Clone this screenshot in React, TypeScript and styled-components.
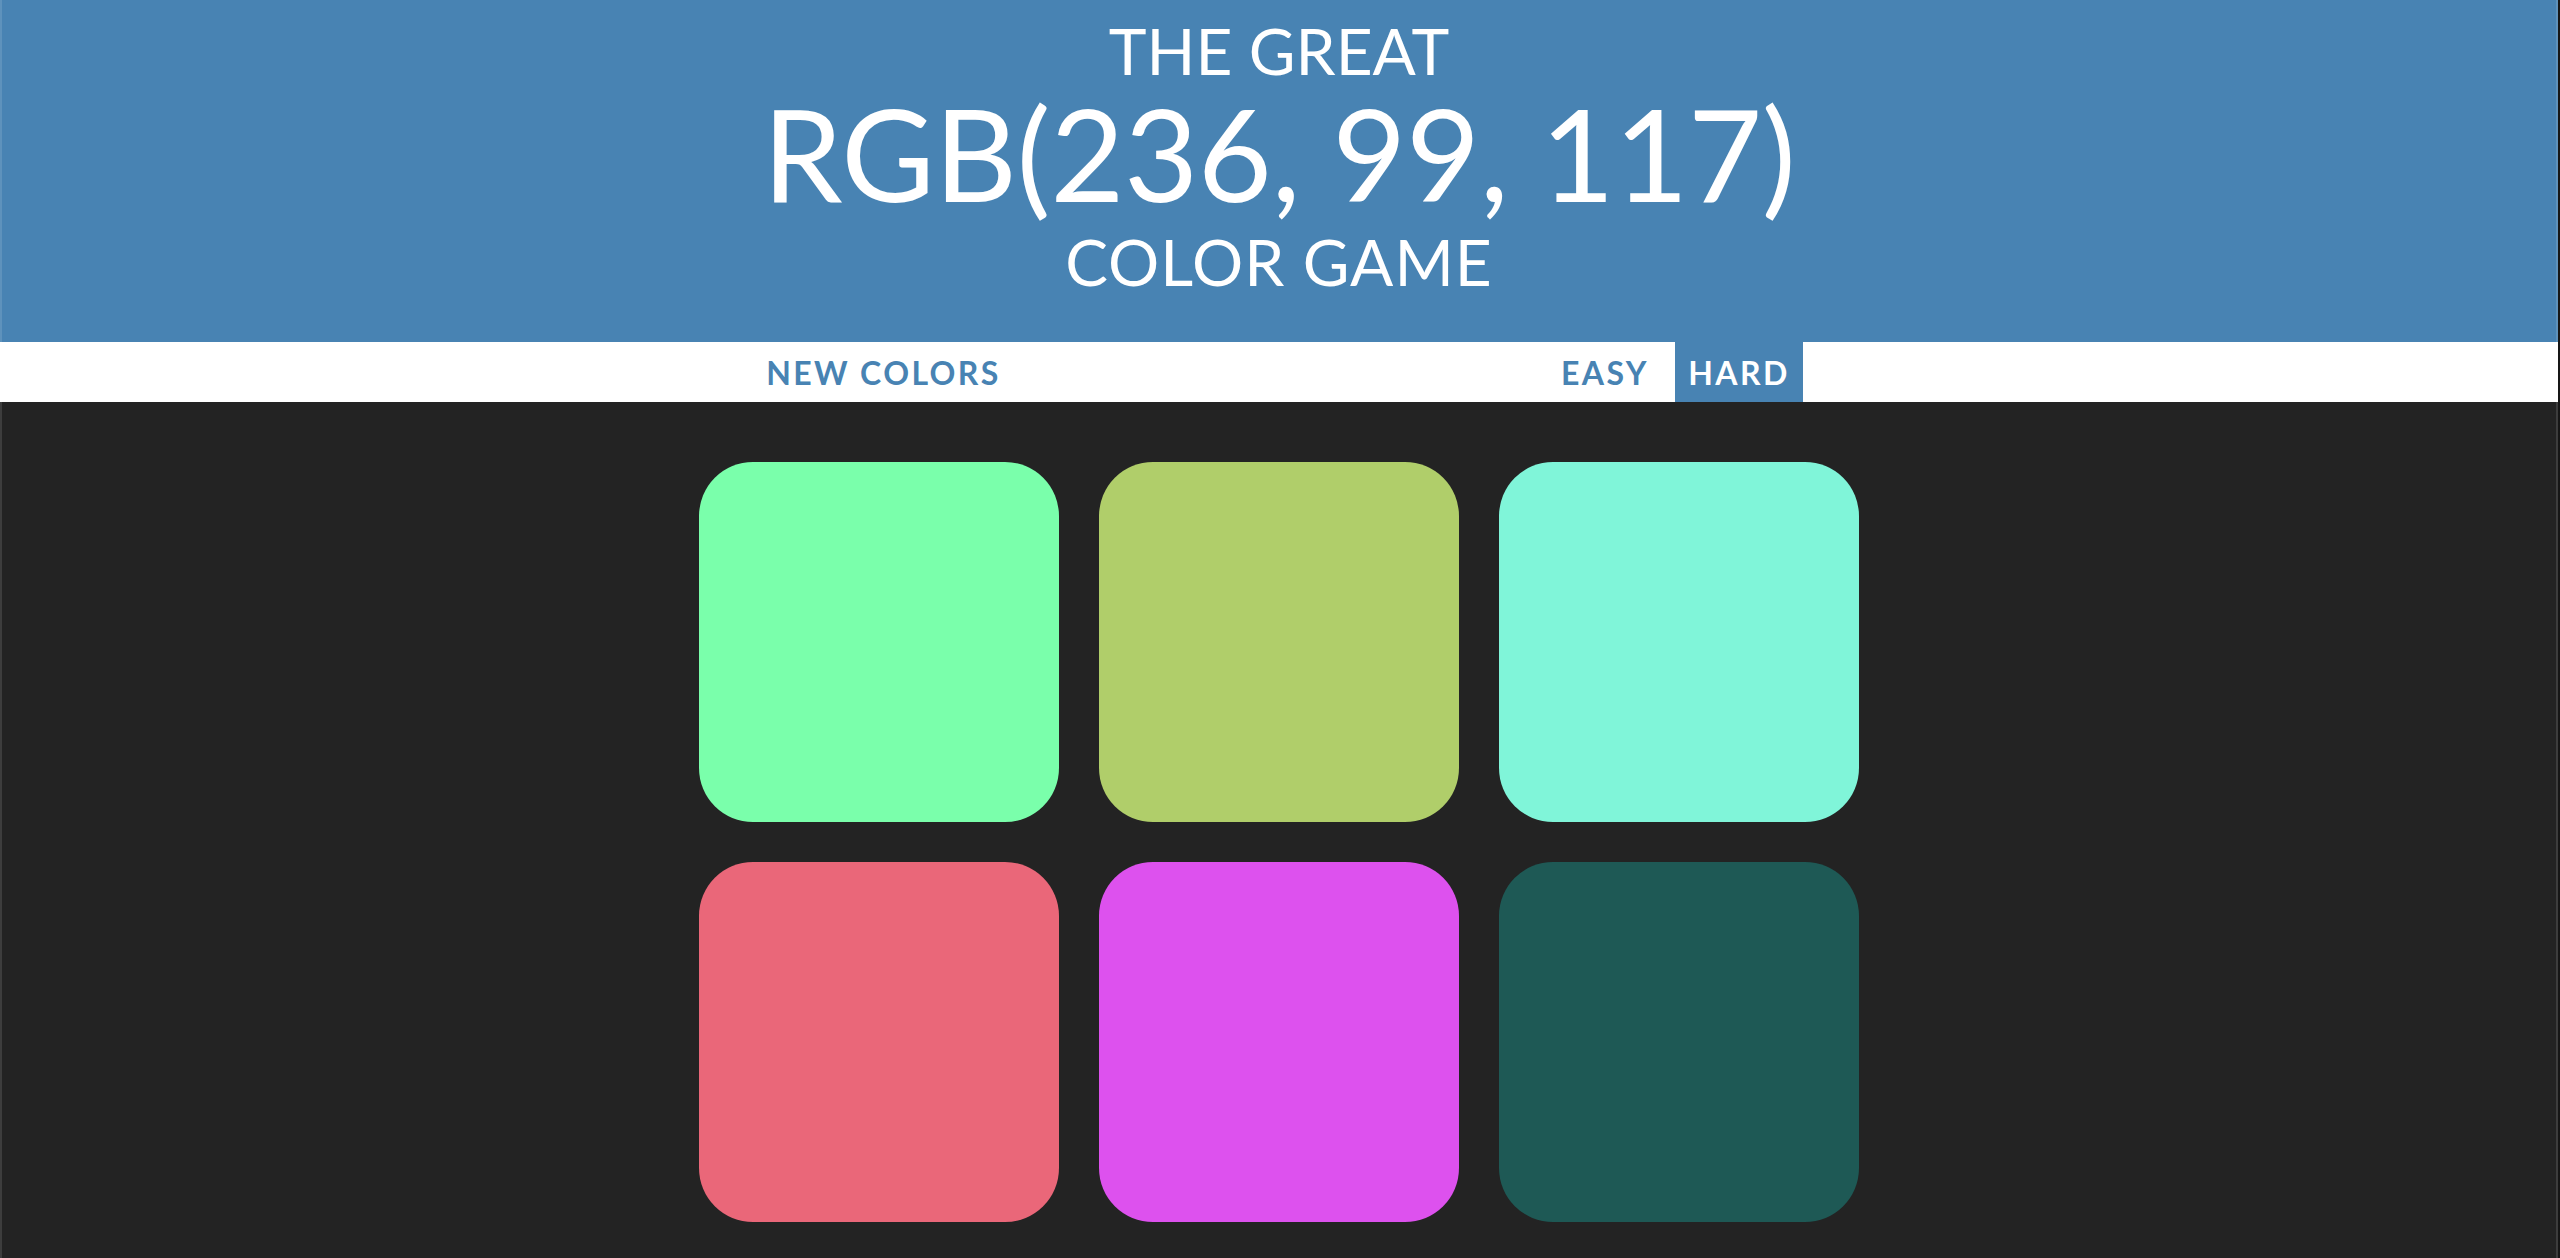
import { useState } from 'react'
import styled, { createGlobalStyle } from 'styled-components'

const BLUE = '#4883b3'

const GlobalStyle = createGlobalStyle`
  html,
  body {
    margin: 0;
    height: 100%;
    overflow: hidden;
  }

  body {
    background: #232323;
    font-family: Lato, 'Open Sans', sans-serif;
  }

  #root {
    height: 100%;
  }
`

// window frame: thin light edges, dark line on the right
const Page = styled.div`
  position: relative;
  height: 100%;
  border-right: 2px solid #161616;

  &::before,
  &::after {
    content: '';
    position: absolute;
    top: 0;
    bottom: 0;
    width: 2px;
    background: rgba(255, 255, 255, 0.12);
    pointer-events: none;
  }
  &::before {
    left: 0;
  }
  &::after {
    right: 0;
  }
`

const Header = styled.h1`
  margin: 0;
  height: 342px;
  box-sizing: border-box;
  padding-top: 16px;
  background: ${BLUE};
  color: #fff;
  text-align: center;
  font-weight: 400;
  text-transform: uppercase;
`

const Line = styled.span<{ $size: number; $lh: number; $ls?: number }>`
  display: block;
  font-size: ${(p) => p.$size}px;
  line-height: ${(p) => p.$lh}px;
  letter-spacing: ${(p) => p.$ls ?? 0}px;
`

const Stripe = styled.nav`
  display: flex;
  justify-content: center;
  height: 60px;
  background: #fff;
`

const NavButton = styled.button<{ $w: number; $active?: boolean }>`
  width: ${(p) => p.$w}px;
  height: 100%;
  padding: 0;
  border: none;
  outline: none;
  background: ${(p) => (p.$active ? BLUE : 'none')};
  color: ${(p) => (p.$active ? '#fff' : BLUE)};
  font-family: Lato, 'Open Sans', sans-serif;
  font-weight: 700;
  font-size: 32px;
  letter-spacing: 2.4px;
  text-transform: uppercase;
  cursor: pointer;

  & + & {
    margin-left: 13px;
  }
`

const Message = styled.span`
  width: 536px;
`

const Board = styled.main`
  width: 1200px;
  box-sizing: border-box;
  margin: 40px auto;
  padding: 20px;
  display: grid;
  grid-template-columns: repeat(3, 360px);
  gap: 40px;
`

const Square = styled.div<{ $color: string }>`
  width: 360px;
  height: 360px;
  border-radius: 54px;
  background: ${(p) => p.$color};
  cursor: pointer;
`

const COLORS = ['#7affab', '#b0ce6a', '#80f5d9', '#ea6779', '#dd51ee', '#1e5955']

const App = () => {
  const [mode, setMode] = useState<'easy' | 'hard'>('hard')
  const shown = mode === 'hard' ? COLORS : COLORS.slice(0, 3)

  return (
    <Page>
      <GlobalStyle />
      <Header>
        <Line $size={64} $lh={70}>
          The Great
        </Line>
        <Line $size={128} $lh={133} $ls={-0.5}>
          RGB(236, 99, 117)
        </Line>
        <Line $size={64} $lh={85} $ls={1}>
          Color Game
        </Line>
      </Header>
      <Stripe>
        <NavButton $w={257}>New Colors</NavButton>
        <Message />
        <NavButton $w={114} $active={mode === 'easy'} onClick={() => setMode('easy')}>
          Easy
        </NavButton>
        <NavButton $w={128} $active={mode === 'hard'} onClick={() => setMode('hard')}>
          Hard
        </NavButton>
      </Stripe>
      <Board>
        {shown.map((c) => (
          <Square key={c} $color={c} />
        ))}
      </Board>
    </Page>
  )
}

export default App
